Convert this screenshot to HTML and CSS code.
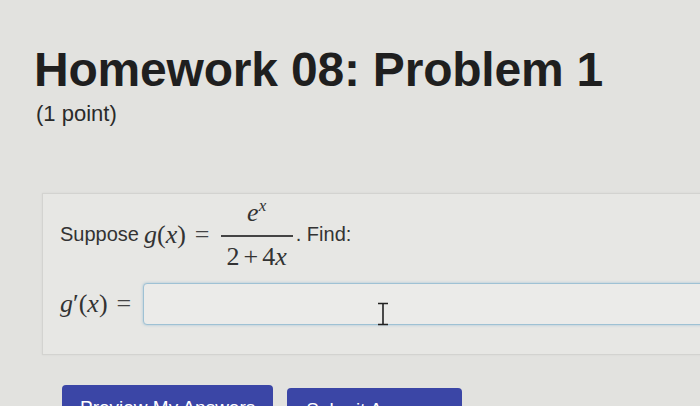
FILE: index.html
```html
<!DOCTYPE html>
<html>
<head>
<meta charset="utf-8">
<link rel="stylesheet" href="styles.css">
</head>
<body>
<div class="page">
  <h1 class="title">Homework 08: Problem 1</h1>
  <div class="points">(1 point)</div>
  <div class="problem">
    <div class="row row-question">
      <span class="text">Suppose</span>
      <span class="math"><i>g</i>(<i>x</i>)<span class="eq">=</span></span>
      <span class="frac">
        <span class="num"><i>e</i><sup><i>x</i></sup></span>
        <span class="bar"></span>
        <span class="den">2<span class="plus">+</span>4<i>x</i></span>
      </span>
      <span class="text">. Find:</span>
    </div>
    <div class="row row-answer">
      <span class="math"><i>g</i>′(<i>x</i>)<span class="eq">=</span></span>
      <div class="answer">
        <svg class="cursor" width="14" height="24" viewBox="0 0 14 24">
          <path d="M2 1.5h10M7 1.5v21M2 22.5h10" stroke="#222" stroke-width="1.6" fill="none"/>
        </svg>
      </div>
    </div>
  </div>
  <div class="buttons">
    <button class="btn">Preview My Answers</button>
    <button class="btn btn-submit">Submit Answers</button>
  </div>
</div>
</body>
</html>
```
FILE: styles.css
```css
html, body {
  margin: 0;
  padding: 0;
  height: 100%;
  overflow: hidden;
}
body {
  background: #e2e2df;
  font-family: "Liberation Sans", Arial, sans-serif;
  color: #2a2a2a;
}
.page {
  padding: 42px 0 0 34px;
}
.title {
  margin: 0;
  font-size: 48px;
  line-height: 55px;
  font-weight: bold;
  color: #1f1f1f;
  letter-spacing: -0.2px;
}
.points {
  margin: 4px 0 0 2px;
  font-size: 22px;
  line-height: 26px;
  color: #2a2a2a;
}
.problem {
  margin: 66px -40px 0 8px;
  background: #e7e7e4;
  border: 1px solid #d3d3d0;
  box-shadow: 0 0 2px rgba(0,0,0,0.06);
  padding: 5px 0 29px 17px;
}
.row {
  display: flex;
  align-items: center;
}
.text {
  font-size: 20px;
  color: #333;
}
.math {
  font-family: "Liberation Serif", "Times New Roman", serif;
  font-size: 26px;
  color: #333;
  margin-left: 5px;
  white-space: nowrap;
}
.math i, .frac i {
  font-style: italic;
}
.eq {
  margin: 0 0 0 9px;
  color: #444;
}
.frac {
  display: inline-flex;
  flex-direction: column;
  align-items: stretch;
  font-family: "Liberation Serif", "Times New Roman", serif;
  font-size: 26px;
  color: #333;
  margin: 0 3px 0 11px;
  text-align: center;
}
.num {
  line-height: 28px;
  padding-bottom: 8px;
}
.num sup {
  font-size: 17px;
  vertical-align: 10px;
  line-height: 0;
}
.bar {
  height: 1.5px;
  background: #444;
}
.den {
  line-height: 28px;
  padding: 6px 6px 0;
}
.plus {
  margin: 0 4px;
}
.row-answer {
  margin-top: 12px;
}
.row-answer .math {
  margin-left: 0;
  font-size: 26px;
}
.answer {
  position: relative;
  flex: 1;
  height: 40px;
  margin-left: 12px;
  background: #ebebe9;
  border: 1px solid #9ec1d4;
  border-radius: 4px;
  box-shadow: 0 0 3px rgba(110,165,200,0.55);
}
.cursor {
  position: absolute;
  left: 232px;
  top: 18px;
}
.buttons {
  display: flex;
  gap: 14px;
  margin: 30px 0 0 28px;
}
.btn {
  font-family: "Liberation Sans", Arial, sans-serif;
  font-size: 19px;
  color: #fff;
  background: #3b46a6;
  border: none;
  border-radius: 4px;
  padding: 11px 18px 12px;
  line-height: 22px;
}
.btn-submit {
  margin-top: 3px;
  padding: 11px 19px 12px;
}
```
